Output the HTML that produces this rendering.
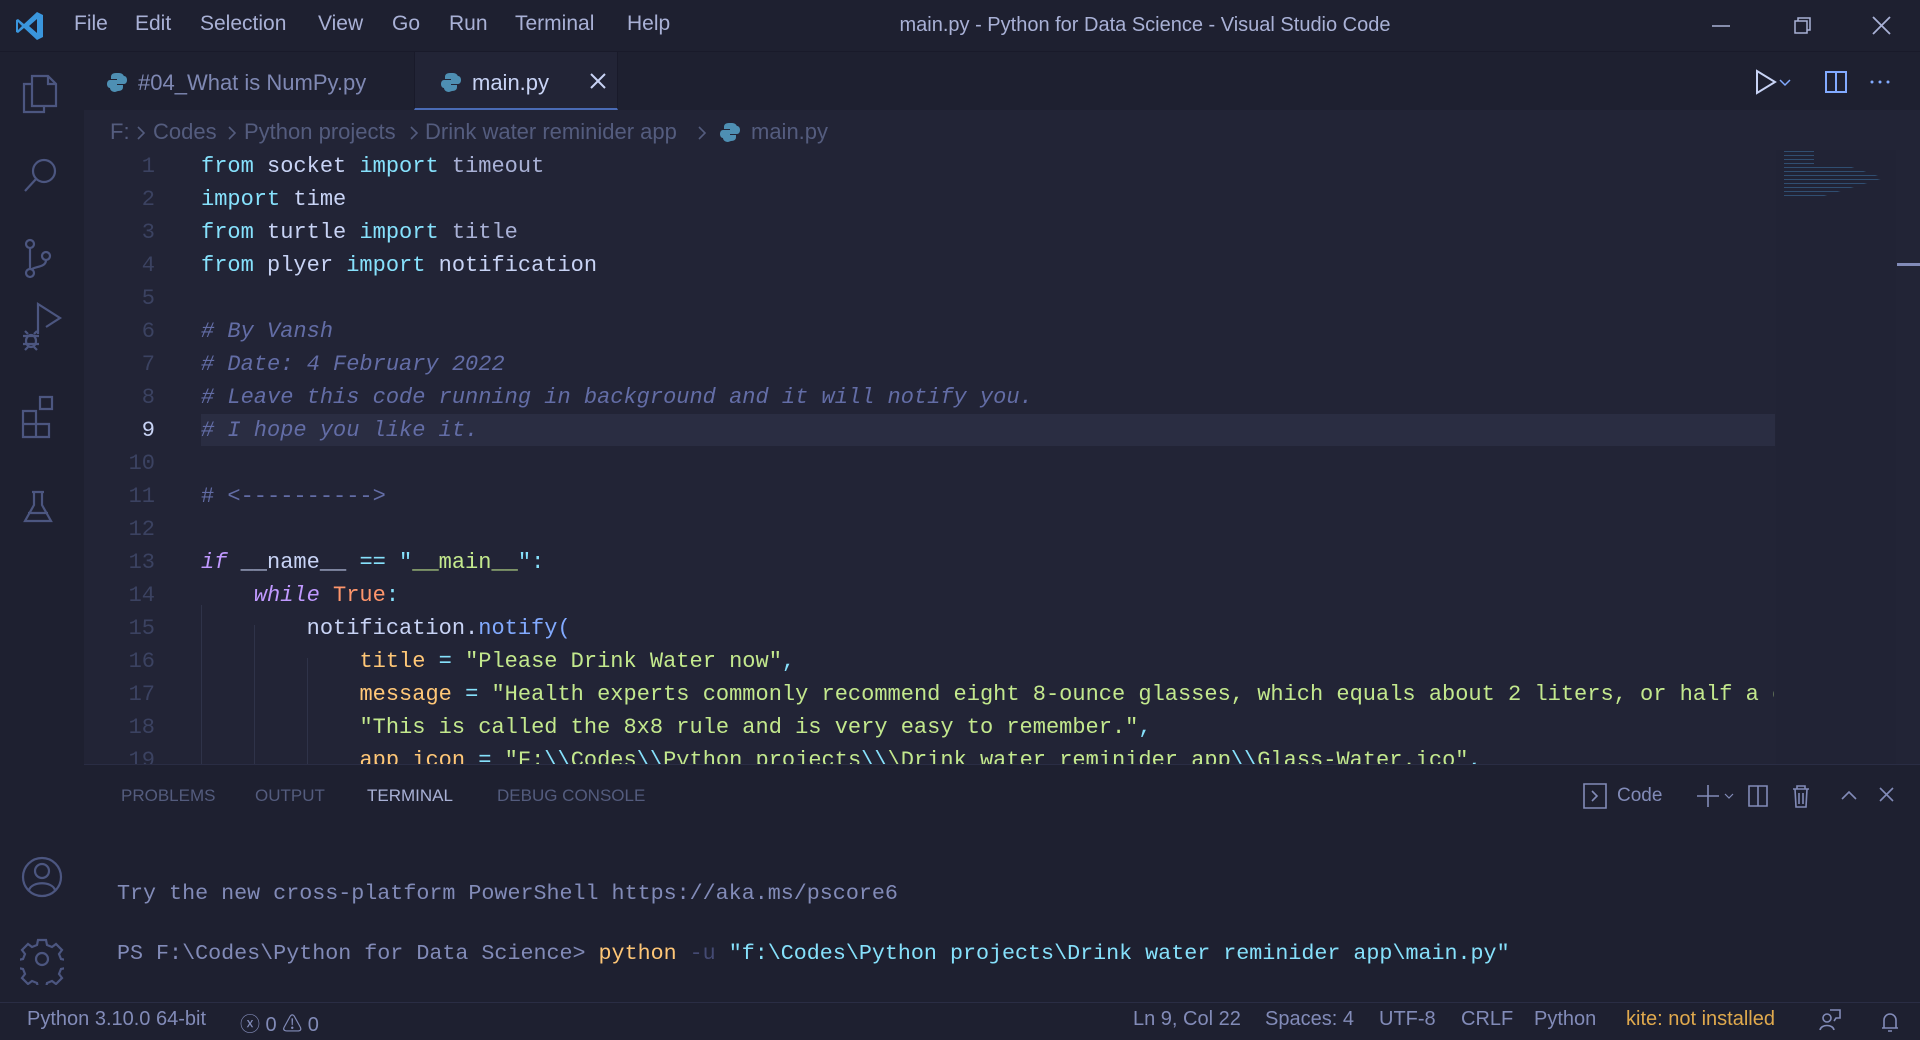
<!DOCTYPE html>
<html><head><meta charset="utf-8"><style>
*{margin:0;padding:0;box-sizing:border-box}
body{width:1920px;height:1040px;overflow:hidden;background:#1f2132;font-family:"Liberation Sans",sans-serif;position:relative;color:#828bb8}
.a{position:absolute;white-space:pre}
.mono{font-family:"Liberation Mono",monospace}
#title{left:0;top:0;width:1920px;height:52px;background:#1e2030;border-bottom:1px solid #191a2a}
#act{left:0;top:52px;width:84px;height:950px;background:#1e2030}
#tabs{left:84px;top:52px;width:1836px;height:58px;background:#1e2030}
#edit{left:84px;top:110px;width:1836px;height:654px;background:#222436}
#panel{left:84px;top:764px;width:1836px;height:238px;background:#1e2030;border-top:1px solid #2a2d44}
#status{left:0;top:1002px;width:1920px;height:38px;background:#1e2030;border-top:1px solid #2a2d44}
.menu{top:12px;font-size:21px;color:#a9b1d6}
.ln{font-size:22px;color:#3b4261;width:70px;text-align:right;left:85px;font-family:"Liberation Mono",monospace}
.cl{font-size:22px;left:201px;color:#c8d3f5;font-family:"Liberation Mono",monospace}
.k{color:#86e1fc}.c{color:#636da6;font-style:italic}.s{color:#c3e88d}.o{color:#ffc777}.p{color:#c099ff;font-style:italic}.t{color:#ff966c}.f{color:#82aaff}.d{color:#a9b1d6}
.st{top:1008px;font-size:20px;color:#828bb8}
.pt{top:786px;font-size:17px;color:#545c7e}
.bc{top:119px;font-size:22px;color:#545c7e}
svg{position:absolute}
</style></head><body>
<div class="a" id="title"></div>
<div class="a" id="act"></div>
<div class="a" id="tabs"></div>
<div class="a" id="edit"></div>
<div class="a" id="panel"></div>
<div class="a" id="status"></div>

<!-- title bar -->
<svg style="left:14px;top:10px" width="32" height="32" viewBox="0 0 32 32"><path d="M23 2 L29 5 V27 L23 30 L10 18 L4 23 L2 22 V10 L4 9 L10 14 Z M23 9 L15 16 L23 23 Z M4 12 V20 L8 16 Z" fill="#3a96dd" fill-rule="evenodd"/></svg>
<div class="a menu" style="left:74px">File</div>
<div class="a menu" style="left:135px">Edit</div>
<div class="a menu" style="left:200px">Selection</div>
<div class="a menu" style="left:318px">View</div>
<div class="a menu" style="left:392px">Go</div>
<div class="a menu" style="left:449px">Run</div>
<div class="a menu" style="left:515px">Terminal</div>
<div class="a menu" style="left:627px">Help</div>
<div class="a" style="left:0;width:2290px;text-align:center;top:14px;font-size:20px;color:#a9b1d6">main.py - Python for Data Science - Visual Studio Code</div>
<svg style="left:1710px;top:14px" width="190" height="24"><path d="M2 12h18" stroke="#a9b1d6" stroke-width="1.5"/><path d="M85 7h12v12h-12z M88 7v-3h12v12h-3" stroke="#a9b1d6" fill="none" stroke-width="1.5"/><path d="M163 3l17 17M180 3l-17 17" stroke="#a9b1d6" stroke-width="1.8"/></svg>

<!-- activity icons -->
<svg style="left:20px;top:72px" width="44" height="460" fill="none" stroke="#4c5680" stroke-width="2.2">
<path d="M12 4h16l8 8v22h-24z M28 4v8h8 M12 12h-8v28h20v-6"/>
<circle cx="24" cy="99" r="11"/><path d="M16 107l-11 12"/>
<circle cx="10" cy="172" r="4"/><circle cx="10" cy="201" r="4"/><circle cx="26" cy="184" r="4"/><path d="M10 176v21 M26 188c0 8-12 6-15 10"/>
<path d="M18 262v-30l22 14-14 9"/><ellipse cx="11" cy="269" rx="5" ry="6"/><path d="M3 264h16M3 272h16M5 259l3 3M17 259l-3 3M5 278l3-3M17 278l-3-3"/>
<path d="M3 339h13v13h-13z M3 352h13v13h-13z M16 352h13v13h-13z M20 325h12v12h-12z"/>
<path d="M12 420h12 M14 420v13l-9 16h26l-9-16v-13 M8 441h20"/>
</svg>
<svg style="left:20px;top:855px" width="44" height="130" fill="none" stroke="#4c5680" stroke-width="2.2">
<circle cx="22" cy="22" r="19"/><circle cx="22" cy="16" r="7"/><path d="M9 35c3-9 23-9 26 0"/>
<g transform="translate(22,104)"><circle r="6"/><path d="M-4 -19h8l1 5 5 2 4-3 6 6-3 4 2 5 5 1v8l-5 1-2 5 3 4-6 6-4-3-5 2-1 5h-8l-1-5-5-2-4 3-6-6 3-4-2-5-5-1v-8l5-1 2-5-3-4 6-6 4 3 5-2z"/></g>
</svg>

<!-- tabs -->
<div class="a" style="left:414px;top:52px;width:204px;height:58px;background:#222436;border-bottom:2px solid #4a6bb5;border-left:1px solid #191a2a;border-right:1px solid #191a2a"></div>
<svg style="left:107px;top:72px" width="20" height="20" viewBox="0 0 20 20"><path d="M9 1c-4 0-5 2-5 4v2h6v1H3c-2 0-3 2-3 4s1 4 3 4h2v-3c0-2 2-3 4-3h5c2 0 3-1 3-3V5c0-2-2-4-5-4z" fill="#4e8fb3"/><path d="M11 19c4 0 5-2 5-4v-2h-6v-1h7c2 0 3-2 3-4s-1-4-3-4h-2v3c0 2-2 3-4 3H6c-2 0-3 1-3 3v3c0 2 2 4 5 4z" fill="#4e8fb3"/></svg>
<div class="a" style="left:138px;top:70px;font-size:22px;color:#7f88b3">#04_What is NumPy.py</div>
<svg style="left:441px;top:72px" width="20" height="20" viewBox="0 0 20 20"><path d="M9 1c-4 0-5 2-5 4v2h6v1H3c-2 0-3 2-3 4s1 4 3 4h2v-3c0-2 2-3 4-3h5c2 0 3-1 3-3V5c0-2-2-4-5-4z" fill="#4e8fb3"/><path d="M11 19c4 0 5-2 5-4v-2h-6v-1h7c2 0 3-2 3-4s-1-4-3-4h-2v3c0 2-2 3-4 3H6c-2 0-3 1-3 3v3c0 2 2 4 5 4z" fill="#4e8fb3"/></svg>
<div class="a" style="left:472px;top:70px;font-size:22px;color:#c8d3f5">main.py</div>
<svg style="left:590px;top:73px" width="16" height="16"><path d="M1 1l14 14M15 1L1 15" stroke="#c8d3f5" stroke-width="2"/></svg>
<svg style="left:1752px;top:68px" width="160" height="30" fill="none" stroke="#c8d3f5" stroke-width="2"><path d="M5 3v22l18-11z"/><path d="M28 12l5 5 5-5" stroke="#82aaff" stroke-width="1.5"/><path d="M74 4h20v20h-20z M84 4v20" stroke="#82aaff"/><circle cx="120" cy="14" r="1.5" fill="#82aaff" stroke="none"/><circle cx="128" cy="14" r="1.5" fill="#82aaff" stroke="none"/><circle cx="136" cy="14" r="1.5" fill="#82aaff" stroke="none"/></svg>

<!-- breadcrumbs -->
<div class="a bc" style="left:110px">F:</div>
<div class="a bc" style="left:153px">Codes</div>
<div class="a bc" style="left:244px">Python projects</div>
<div class="a bc" style="left:425px">Drink water reminider app</div>
<div class="a bc" style="left:751px">main.py</div>
<svg style="left:134px;top:122px" width="600" height="22" fill="none" stroke="#545c7e" stroke-width="1.6"><path d="M4 5l6 6-6 6"/><path d="M95 5l6 6-6 6"/><path d="M277 5l6 6-6 6"/><path d="M565 5l6 6-6 6"/></svg>
<svg style="left:720px;top:122px" width="20" height="20" viewBox="0 0 20 20"><path d="M9 1c-4 0-5 2-5 4v2h6v1H3c-2 0-3 2-3 4s1 4 3 4h2v-3c0-2 2-3 4-3h5c2 0 3-1 3-3V5c0-2-2-4-5-4z" fill="#4e8fb3"/><path d="M11 19c4 0 5-2 5-4v-2h-6v-1h7c2 0 3-2 3-4s-1-4-3-4h-2v3c0 2-2 3-4 3H6c-2 0-3 1-3 3v3c0 2 2 4 5 4z" fill="#4e8fb3"/></svg>

<!-- editor -->
<div class="a" style="left:201px;top:414px;width:1574px;height:32px;background:#2a2d42"></div>
<div class="a" style="left:1776px;top:150px;width:120px;height:614px;background:#212335"></div>
<div class="a" style="left:1897px;top:263px;width:23px;height:3px;background:#828bb8"></div>
<div class="a" style="left:1784px;top:151px;width:100px;height:45px;opacity:.6;background:repeating-linear-gradient(#3a6b99 0 1px,transparent 1px 4px);clip-path:polygon(0 0,30% 0,30% 30%,60% 30%,100% 60%,40% 100%,0 100%)"></div>
<div class="a" style="left:201px;top:605px;width:1px;height:159px;background:#2f3349"></div>
<div class="a" style="left:254px;top:625px;width:1px;height:139px;background:#2f3349"></div>
<div class="a" style="left:307px;top:658px;width:1px;height:106px;background:#2f3349"></div>
<div class="a" style="left:84px;top:150px;width:1690px;height:614px;overflow:hidden">
<div style="position:relative;left:-84px;top:-165px">
<div class="a ln" style="top:151px">1</div><div class="a cl" style="top:151px"><span class="k">from</span> socket <span class="k">import</span> <span class="d">timeout</span></div>
<div class="a ln" style="top:184px">2</div><div class="a cl" style="top:184px"><span class="k">import</span> time</div>
<div class="a ln" style="top:217px">3</div><div class="a cl" style="top:217px"><span class="k">from</span> turtle <span class="k">import</span> <span class="d">title</span></div>
<div class="a ln" style="top:250px">4</div><div class="a cl" style="top:250px"><span class="k">from</span> plyer <span class="k">import</span> notification</div>
<div class="a ln" style="top:283px">5</div>
<div class="a ln" style="top:316px">6</div><div class="a cl c" style="top:316px"># By Vansh</div>
<div class="a ln" style="top:349px">7</div><div class="a cl c" style="top:349px"># Date: 4 February 2022</div>
<div class="a ln" style="top:382px">8</div><div class="a cl c" style="top:382px"># Leave this code running in background and it will notify you.</div>
<div class="a ln" style="top:415px;color:#c8d3f5">9</div><div class="a cl c" style="top:415px"># I hope you like it.</div>
<div class="a ln" style="top:448px">10</div>
<div class="a ln" style="top:481px">11</div><div class="a cl c" style="top:481px;font-style:normal"># &lt;----------&gt;</div>
<div class="a ln" style="top:514px">12</div>
<div class="a ln" style="top:547px">13</div><div class="a cl" style="top:547px"><span class="p">if</span> __name__ <span class="k">==</span> <span class="k">"</span><span class="s">__main__</span><span class="k">"</span><span class="k">:</span></div>
<div class="a ln" style="top:580px">14</div><div class="a cl" style="top:580px">    <span class="p">while</span> <span class="t">True</span><span class="k">:</span></div>
<div class="a ln" style="top:613px">15</div><div class="a cl" style="top:613px">        notification.<span class="f">notify(</span></div>
<div class="a ln" style="top:646px">16</div><div class="a cl" style="top:646px">            <span class="o">title</span> <span class="k">=</span> <span class="s">"Please Drink Water now"</span><span class="k">,</span></div>
<div class="a ln" style="top:679px">17</div><div class="a cl" style="top:679px">            <span class="o">message</span> <span class="k">=</span> <span class="s">"Health experts commonly recommend eight 8-ounce glasses, which equals about 2 liters, or half a gallon a day."</span></div>
<div class="a ln" style="top:712px">18</div><div class="a cl" style="top:712px">            <span class="s">"This is called the 8x8 rule and is very easy to remember."</span><span class="k">,</span></div>
<div class="a ln" style="top:745px">19</div><div class="a cl" style="top:745px">            <span class="o">app_icon</span> <span class="k">=</span> <span class="s">"F:<span class="k">\\</span>Codes<span class="k">\\</span>Python projects<span class="k">\\</span>\Drink water reminider app<span class="k">\\</span>Glass-Water.ico"</span><span class="k">,</span></div>
</div></div>

<!-- panel -->
<div class="a pt" style="left:121px">PROBLEMS</div>
<div class="a pt" style="left:255px">OUTPUT</div>
<div class="a pt" style="left:367px;color:#a9b1d6">TERMINAL</div>
<div class="a pt" style="left:497px">DEBUG CONSOLE</div>
<svg style="left:1583px;top:783px" width="330" height="26" fill="none" stroke="#828bb8" stroke-width="1.6"><path d="M1 1h22v24h-22z M9 8l5 5-5 5"/><path d="M114 13h22M125 2v22"/><path d="M142 11l4 4 4-4" stroke-width="1.2"/><path d="M166 3h18v20h-18z M175 3v20"/><path d="M210 6h16M214 6v-3h8v3 M212 6l1 18h10l1-18 M216 10v11M220 10v11"/><path d="M259 16l7-7 7 7"/><path d="M297 5l13 13M310 5l-13 13"/></svg>
<div class="a" style="left:1617px;top:785px;font-size:19px;color:#828bb8">Code</div>
<div class="a mono" style="left:117px;top:881px;font-size:21.7px;color:#828bb8">Try the new cross-platform PowerShell https://aka.ms/pscore6</div>
<div class="a mono" style="left:117px;top:941px;font-size:21.7px;color:#828bb8">PS F:\Codes\Python for Data Science&gt; <span style="color:#ffc777">python</span> <span style="color:#444a73">-u</span> <span style="color:#86e1fc">"f:\Codes\Python projects\Drink water reminider app\main.py"</span></div>

<!-- status -->
<div class="a st" style="left:27px">Python 3.10.0 64-bit</div>
<div class="a st" style="left:240px">ⓧ 0 ⚠ 0</div>
<div class="a st" style="left:1133px">Ln 9, Col 22</div>
<div class="a st" style="left:1265px">Spaces: 4</div>
<div class="a st" style="left:1379px">UTF-8</div>
<div class="a st" style="left:1461px">CRLF</div>
<div class="a st" style="left:1534px">Python</div>
<div class="a st" style="left:1626px;color:#e0a94d">kite: not installed</div>
<svg style="left:1818px;top:1008px" width="90" height="26" fill="none" stroke="#828bb8" stroke-width="1.6"><circle cx="9" cy="10" r="4"/><path d="M2 22c1-6 13-6 14 0 M12 2h10v8h-4l-2 3"/><path d="M64 20h16 M66 20v-8a6 6 0 0 1 12 0v8 M70 23h4"/></svg>
</body></html>
